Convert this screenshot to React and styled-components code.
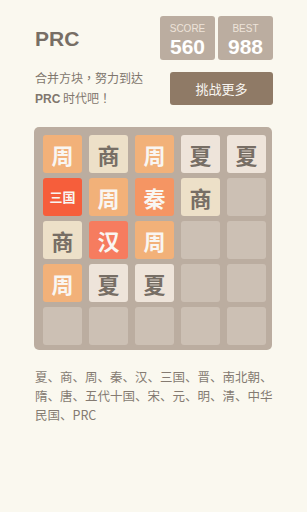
import React from "react";
import styled, { createGlobalStyle } from "styled-components";

const GlobalStyle = createGlobalStyle`
	html,
	body {
		margin: 0;
		padding: 0;
		background: #faf8ef;
	}
	body {
		font-family: "Liberation Sans", "Noto Sans CJK SC", sans-serif;
		color: #776e65;
	}
`;

const TILES = {
	夏: { bg: "#eee4da", color: "#776e65" },
	商: { bg: "#ede0c8", color: "#776e65" },
	周: { bg: "#f2b179", color: "#f9f6f2" },
	秦: { bg: "#f59563", color: "#f9f6f2" },
	汉: { bg: "#f67c5f", color: "#f9f6f2" },
	三国: { bg: "#f65e3b", color: "#f9f6f2" }
};

const grid = [
	["周", "商", "周", "夏", "夏"],
	["三国", "周", "秦", "商", ""],
	["商", "汉", "周", "", ""],
	["周", "夏", "夏", "", ""],
	["", "", "", "", ""]
];

const App = () => {
	return (
		<Container>
			<GlobalStyle />
			<Heading>
				<Title>PRC</Title>
				<Scores>
					<ScoreBox>
						<ScoreLabel>Score</ScoreLabel>
						<ScoreValue>560</ScoreValue>
					</ScoreBox>
					<ScoreBox>
						<ScoreLabel>Best</ScoreLabel>
						<ScoreValue>988</ScoreValue>
					</ScoreBox>
				</Scores>
			</Heading>
			<Intro>
				<IntroText lang="zh-TW">
					合并方块，努力到达
					<br />
					<strong>PRC</strong> 时代吧！
				</IntroText>
				<MoreButton>挑战更多</MoreButton>
			</Intro>
			<Board>
				{grid.flat().map((name, i) =>
					name ? (
						<Tile key={i} $bg={TILES[name].bg} $color={TILES[name].color} $small={name.length > 1}>
							{name}
						</Tile>
					) : (
						<Cell key={i} />
					)
				)}
			</Board>
			<Dynasties>
				夏、商、周、秦、汉、三国、晋、南北朝、隋、唐、五代十国、宋、元、明、清、中华民国、PRC
			</Dynasties>
		</Container>
	);
};

const Container = styled.div`
	width: 239px;
	margin: 0 auto;
	padding-top: 16px;
`;

const Heading = styled.div`
	display: flex;
	justify-content: space-between;
	align-items: center;
	height: 44px;
`;

const Title = styled.h1`
	margin: 0 0 0 1px;
	font-size: 21px;
	font-weight: bold;
	color: #776e65;
	line-height: 1;
`;

const Scores = styled.div`
	display: flex;
	gap: 3px;
`;

const ScoreBox = styled.div`
	width: 55px;
	height: 44px;
	box-sizing: border-box;
	padding-top: 7px;
	background: #bbada0;
	border-radius: 3px;
	display: flex;
	flex-direction: column;
	align-items: center;
`;

const ScoreLabel = styled.div`
	font-size: 10px;
	line-height: 12px;
	text-transform: uppercase;
	color: #eee4da;
`;

const ScoreValue = styled.div`
	margin-top: 1px;
	font-size: 21px;
	line-height: 22px;
	font-weight: bold;
	color: #fff;
`;

const Intro = styled.div`
	display: flex;
	justify-content: space-between;
	align-items: center;
	height: 33px;
	margin-top: 12px;
`;

const IntroText = styled.p`
	margin: 0 0 0 1px;
	font-family: "Noto Sans CJK TC", "Liberation Sans", sans-serif;
	font-size: 12px;
	line-height: 20px;
	color: #7f766d;

	strong {
		font-family: "Liberation Sans", sans-serif;
		font-weight: bold;
	}
`;

const MoreButton = styled.button`
	width: 103px;
	height: 33px;
	border: 0;
	border-radius: 3px;
	background: #8f7a66;
	color: #f9f6f2;
	font-family: "Noto Sans CJK SC", sans-serif;
	font-size: 13px;
	font-weight: normal;
	padding: 0;
`;

const Board = styled.div`
	margin-top: 22px;
	box-sizing: border-box;
	width: 238px;
	height: 223px;
	padding: 8px 6px 6px 9px;
	background: #bbada0;
	border-radius: 5px;
	display: grid;
	grid-template-columns: repeat(5, 39px);
	grid-template-rows: repeat(5, 37.5px);
	column-gap: 7px;
	row-gap: 5.5px;
`;

const Cell = styled.div`
	border-radius: 3px;
	background: rgba(238, 228, 218, 0.35);
`;

const Tile = styled.div`
	border-radius: 3px;
	background: ${p => p.$bg};
	color: ${p => p.$color};
	display: flex;
	align-items: center;
	justify-content: center;
	font-family: "Noto Sans CJK SC", sans-serif;
	font-weight: bold;
	font-size: ${p => (p.$small ? "13px" : "22px")};
`;

const Dynasties = styled.p`
	margin: 17px 0 0 1px;
	font-family: "Noto Sans CJK SC", sans-serif;
	font-size: 12.5px;
	line-height: 19px;
	color: #857b72;
`;

export default App;
